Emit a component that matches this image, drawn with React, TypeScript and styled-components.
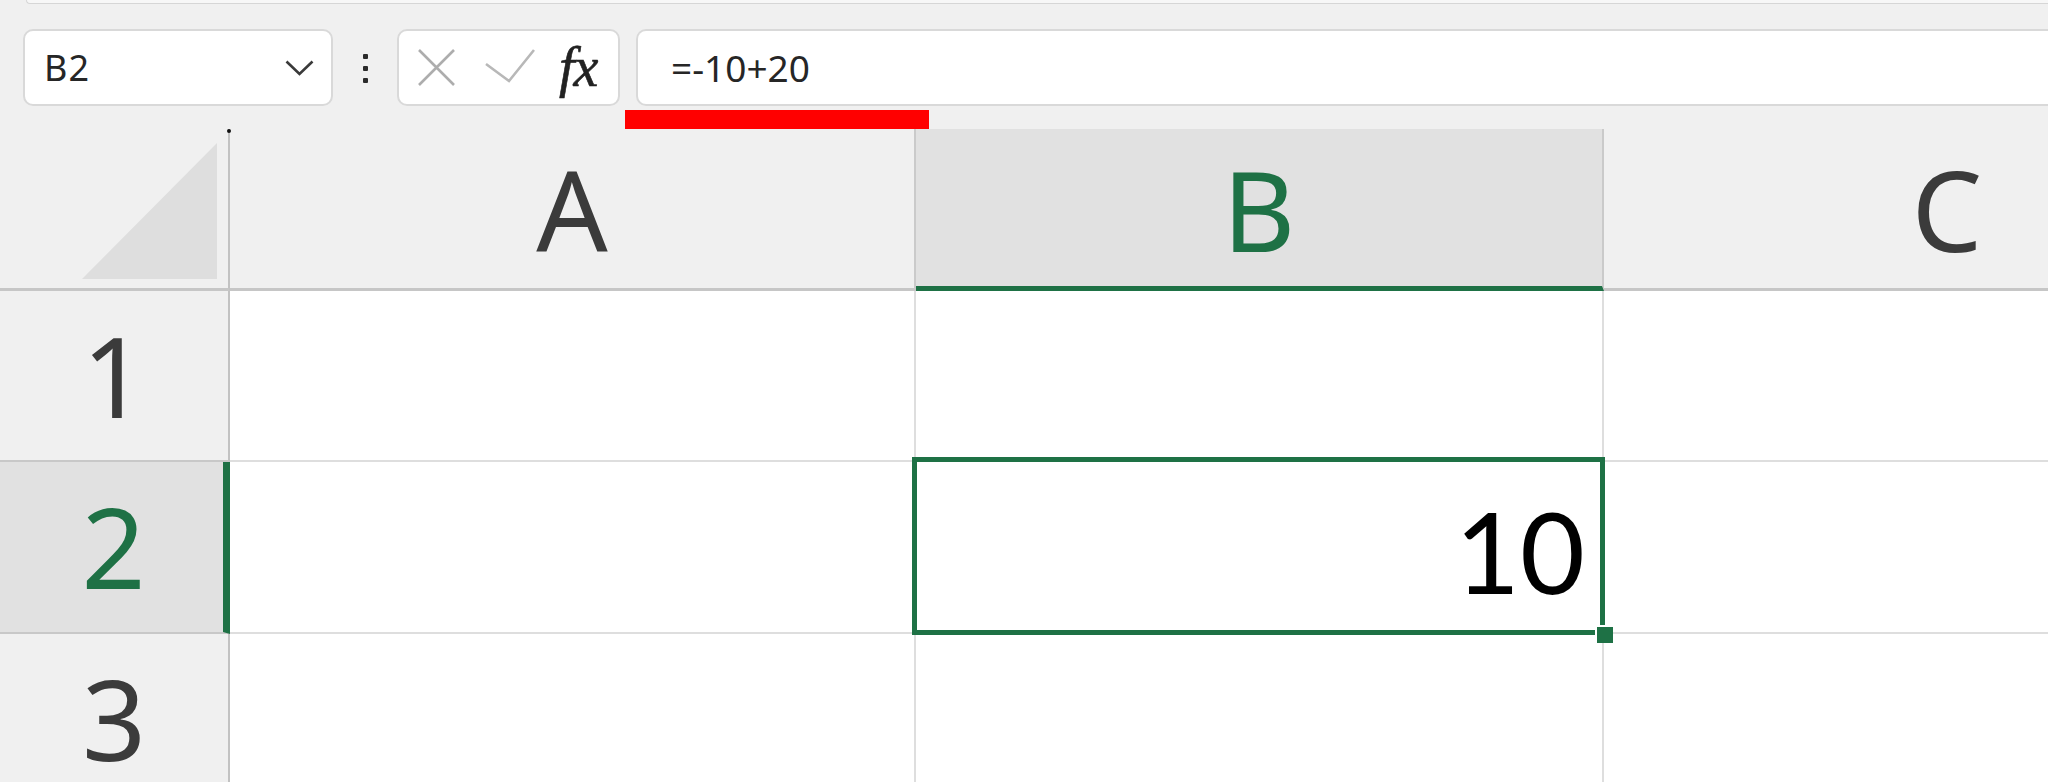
import React from 'react';
import styled, {createGlobalStyle} from 'styled-components';

const GREEN = '#1e7145'

const GlobalStyle = createGlobalStyle`
  html, body {
    margin: 0;
    padding: 0;
    background: #f0f0f0;
    overflow: hidden;
  }
`

const Page = styled.div`
  position: relative;
  width: 2048px;
  height: 782px;
  overflow: hidden;
  background: #f0f0f0;
  font-family: "Noto Sans", "Open Sans", sans-serif;
`

const TopStrip = styled.div`
  height: 3px;
  margin-left: 26px;
  background: #f7f7f7;
  border-bottom: 1px solid #d6d6d6;
  border-left: 1px solid #d6d6d6;
  border-bottom-left-radius: 6px;
`

const Toolbar = styled.div`
  display: flex;
  align-items: center;
  height: 77px;
  margin-top: 25px;
  padding-left: 23px;
`

const Box = styled.div`
  box-sizing: border-box;
  height: 77px;
  background: #fff;
  border: 2px solid #d9d9d9;
  border-radius: 10px;
  display: flex;
  align-items: center;
`

const NameBox = styled(Box)`
  width: 310px;
  padding: 0 17px 0 19px;
  justify-content: space-between;
`

const NameText = styled.span`
  font-size: 36px;
  color: #262626;
  letter-spacing: 1px;
`

const Dots = styled.div`
  width: 64px;
  display: flex;
  flex-direction: column;
  align-items: center;
  gap: 7px;
  padding-top: 2px;
`

const Dot = styled.span`
  width: 5px;
  height: 5px;
  border-radius: 1px;
  background: #2b2b2b;
`

const FuncBox = styled(Box)`
  width: 223px;
  padding-left: 19px;
`

const Fx = styled.span`
  font-family: "Liberation Serif", "DejaVu Serif", serif;
  font-style: italic;
  font-size: 56px;
  color: #222;
  margin-left: 24px;
  margin-top: -2px;
  letter-spacing: -1px;
  -webkit-text-stroke: 0.6px #222;
`

const FormulaBox = styled(Box)`
  flex: 1;
  margin-left: 16px;
  padding-left: 33px;
  border-right: none;
  border-top-right-radius: 0;
  border-bottom-right-radius: 0;
`

const FormulaText = styled.span`
  font-size: 37px;
  color: #262626;
`

// red underline drawn over the bar, an annotation
const Mark = styled.div`
  position: absolute;
  left: 625px;
  top: 110px;
  width: 304px;
  height: 19px;
  background: #ff0000;
`

const Sheet = styled.div`
  display: grid;
  grid-template-columns: 230px 686px 688px 688px;
  grid-template-rows: 162px 171px 172px 156px;
  margin-top: 23px;
  width: max-content;
`

const Corner = styled.div`
  position: relative;
  box-sizing: border-box;
  display: flex;
  justify-content: flex-end;
  align-items: flex-end;
  padding: 0 11px 9px 0;
  border-right: 2px solid #c2c2c2;
  border-bottom: 3px solid #c6c6c6;

  &::before {
    content: '';
    position: absolute;
    top: 0;
    right: -3px;
    width: 4px;
    height: 4px;
    border-radius: 50%;
    background: #111;
  }
`

const Triangle = styled.div`
  width: 135px;
  height: 136px;
  background: #dedede;
  clip-path: polygon(100% 0, 100% 100%, 0 100%);
`

const HeadText = styled.div<{ active?: boolean }>`
  box-sizing: border-box;
  display: flex;
  justify-content: center;
  font-size: 112px;
  line-height: 1;
  color: ${(p) => (p.active ? GREEN : '#3b3b3b')};
  background: ${(p) => (p.active ? '#e1e1e1' : '#f0f0f0')};
`

const ColHead = styled(HeadText)`
  align-items: center;
  border-right: 2px solid #cacaca;
  border-bottom: ${(p) => (p.active ? `5px solid ${GREEN}` : '3px solid #c6c6c6')};
  padding-top: ${(p) => (p.active ? '2px' : '0')};
`

const RowHead = styled(HeadText)`
  align-items: flex-start;
  padding-top: 28px;
  padding-left: ${(p) => (p.active ? '4px' : '0')};
  border-right: ${(p) => (p.active ? `7px solid ${GREEN}` : '2px solid #c2c2c2')};
  border-bottom: 2px solid #c8c8c8;
`

const Cell = styled.div`
  position: relative;
  box-sizing: border-box;
  background: #fff;
  border-right: 2px solid #dedede;
  border-bottom: 2px solid #dedede;
  display: flex;
  align-items: flex-end;
  justify-content: flex-end;
  padding: 0 17px 25px 0;
`

const Value = styled.span`
  font-family: Lato, "DejaVu Sans", sans-serif;
  font-size: 112px;
  line-height: 1;
  color: #000;
`

const Selection = styled.div`
  position: absolute;
  z-index: 2;
  left: -4px;
  top: -5px;
  right: -3px;
  bottom: -3px;
  border: 5px solid ${GREEN};
  pointer-events: none;
`

const Handle = styled.div`
  position: absolute;
  z-index: 3;
  right: -11px;
  bottom: -11px;
  width: 16px;
  height: 16px;
  background: ${GREEN};
  border: 2px solid #fff;
  border-right: none;
  border-bottom: none;
`

const Chevron = () => (
    <svg width="29" height="16" viewBox="0 0 29 16">
        <path d="M1.5 1.5 L14.5 14 L27.5 1.5" fill="none" stroke="#3a3a3a" strokeWidth="2.6"/>
    </svg>
)

const Cross = () => (
    <svg width="37" height="37" viewBox="0 0 37 37">
        <path d="M1 1 L36 36 M36 1 L1 36" fill="none" stroke="#adadad" strokeWidth="2.6"/>
    </svg>
)

const Check = () => (
    <svg width="50" height="34" viewBox="0 0 50 34" style={{marginLeft: 30, marginTop: -4}}>
        <path d="M1 15 L24 32 L49 1" fill="none" stroke="#b8b8b8" strokeWidth="2.6"/>
    </svg>
)

const columns = ['A', 'B', 'C']
const rows = [1, 2, 3]

export default function App() {
    return (
        <Page>
            <GlobalStyle/>
            <TopStrip/>
            <Toolbar>
                <NameBox>
                    <NameText>B2</NameText>
                    <Chevron/>
                </NameBox>
                <Dots>
                    <Dot/>
                    <Dot/>
                    <Dot/>
                </Dots>
                <FuncBox>
                    <Cross/>
                    <Check/>
                    <Fx>fx</Fx>
                </FuncBox>
                <FormulaBox>
                    <FormulaText>=-10+20</FormulaText>
                </FormulaBox>
            </Toolbar>
            <Mark/>
            <Sheet>
                <Corner>
                    <Triangle/>
                </Corner>
                {columns.map((c) => (
                    <ColHead key={c} active={c === 'B'}>{c}</ColHead>
                ))}
                {rows.map((r) => (
                    <React.Fragment key={r}>
                        <RowHead active={r === 2}>{r}</RowHead>
                        {columns.map((c) => (
                            <Cell key={c}>
                                {r === 2 && c === 'B' && (
                                    <>
                                        <Value>10</Value>
                                        <Selection/>
                                        <Handle/>
                                    </>
                                )}
                            </Cell>
                        ))}
                    </React.Fragment>
                ))}
            </Sheet>
        </Page>
    )
}
